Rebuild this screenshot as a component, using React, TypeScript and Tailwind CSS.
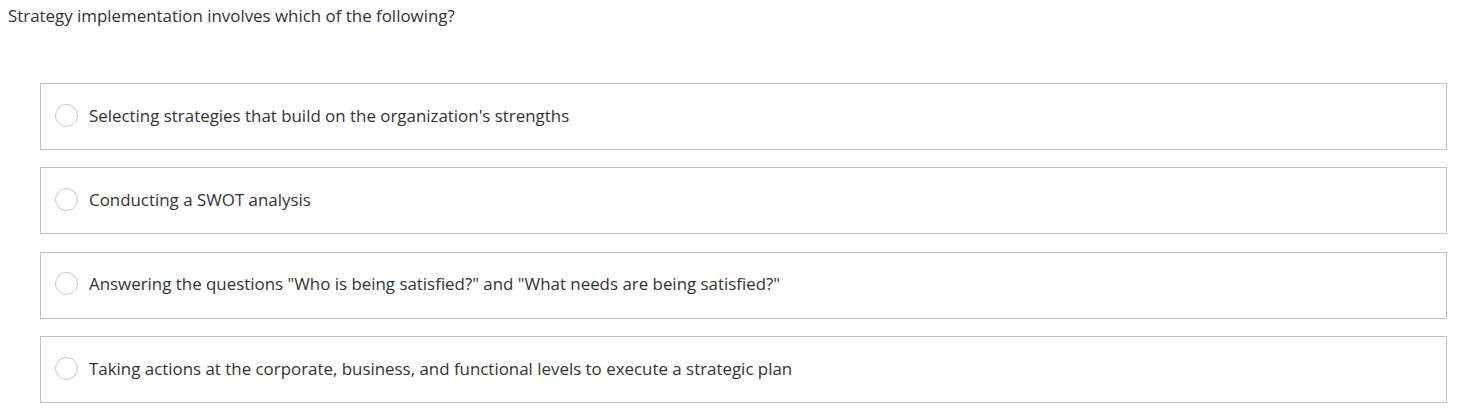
const options = [
  "Selecting strategies that build on the organization's strengths",
  "Conducting a SWOT analysis",
  "Answering the questions \"Who is being satisfied?\" and \"What needs are being satisfied?\"",
  "Taking actions at the corporate, business, and functional levels to execute a strategic plan",
];

export default function App() {
  return (
    <div className="min-h-screen bg-white font-['Open_Sans',sans-serif] text-[#333333]">
      <div className="px-2 pt-[4px] text-[16.9px] leading-[24px]">
        Strategy implementation involves which of the following?
      </div>
      <div className="ml-[40px] mr-[23px] mt-[55px] flex flex-col gap-[17.4px]">
        {options.map((text) => (
          <label
            key={text}
            className="flex h-[67px] cursor-pointer items-center border border-[#c0c0c0] pl-[14px]"
          >
            <span className="mb-[3px] h-[23px] w-[23px] shrink-0 rounded-full border border-[#c4c4c4] bg-white" />
            <span className="mb-[2px] ml-[11px] text-[16.9px] leading-[24px]">{text}</span>
          </label>
        ))}
      </div>
    </div>
  );
}
